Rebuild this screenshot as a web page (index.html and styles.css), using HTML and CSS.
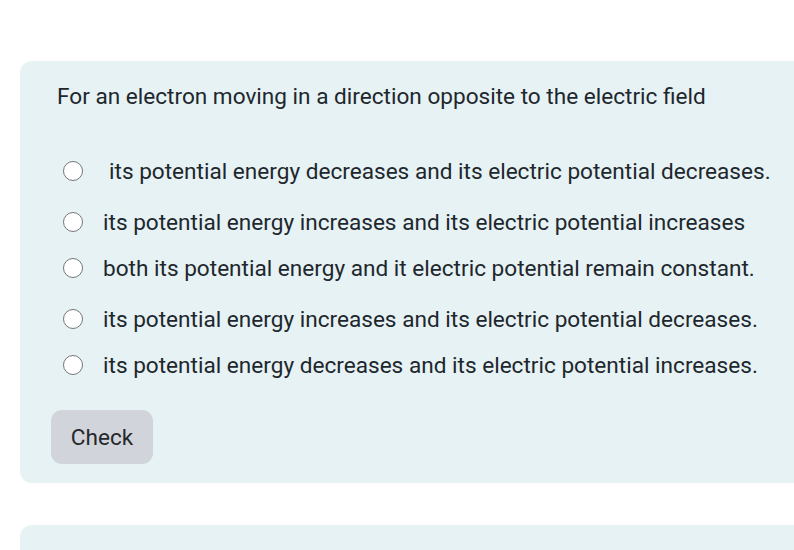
FILE: index.html
```html
<!DOCTYPE html>
<html>
<head>
<meta charset="utf-8">
<link rel="stylesheet" href="styles.css">
</head>
<body>
<div class="page">
  <div class="card">
    <p class="question">For an electron moving in a direction opposite to the electric field</p>
    <div class="options">
      <label class="option gap-after"><span class="radio"></span><span class="label lead">its potential energy decreases and its electric potential decreases.</span></label>
      <label class="option"><span class="radio"></span><span class="label">its potential energy increases and its electric potential increases</span></label>
      <label class="option gap-after"><span class="radio"></span><span class="label">both its potential energy and it electric potential remain constant.</span></label>
      <label class="option"><span class="radio"></span><span class="label">its potential energy increases and its electric potential decreases.</span></label>
      <label class="option"><span class="radio"></span><span class="label">its potential energy decreases and its electric potential increases.</span></label>
    </div>
    <button class="check">Check</button>
  </div>
  <div class="card next"></div>
</div>
</body>
</html>
```
FILE: styles.css
```css
html, body {
  margin: 0;
  padding: 0;
  background: #ffffff;
  overflow: hidden;
}
body {
  font-family: Roboto, "Liberation Sans", Arial, sans-serif;
  color: #1e272d;
}
.page {
  padding: 61px 0 0 20px;
  height: 489px;
  overflow: hidden;
}
.card {
  background: #e6f2f4;
  border-radius: 12px;
  margin-right: -20px;
  padding: 22px 0 19px 31px;
}
.card.next {
  margin-top: 42px;
  height: 60px;
  padding: 0;
}
.question {
  margin: 0 0 37px 6px;
  font-size: 22.6px;
  line-height: 28px;
}
.options {
  display: flex;
  flex-direction: column;
  margin-left: 12px;
}
.option {
  display: flex;
  align-items: center;
  height: 46px;
  font-size: 22.6px;
}
.option.gap-after {
  margin-bottom: 5px;
}
.radio {
  box-sizing: border-box;
  width: 20px;
  height: 20px;
  border-radius: 50%;
  border: 1.5px solid #767676;
  background: #ffffff;
  flex-shrink: 0;
  margin-right: 20px;
}
.label.lead {
  padding-left: 6px;
}
.check {
  display: block;
  margin-top: 22px;
  width: 102px;
  height: 54px;
  border: none;
  border-radius: 11px;
  background: #d1d5db;
  color: #25282c;
  font-family: Roboto, "Liberation Sans", Arial, sans-serif;
  font-size: 22.6px;
  padding: 0;
}
```
